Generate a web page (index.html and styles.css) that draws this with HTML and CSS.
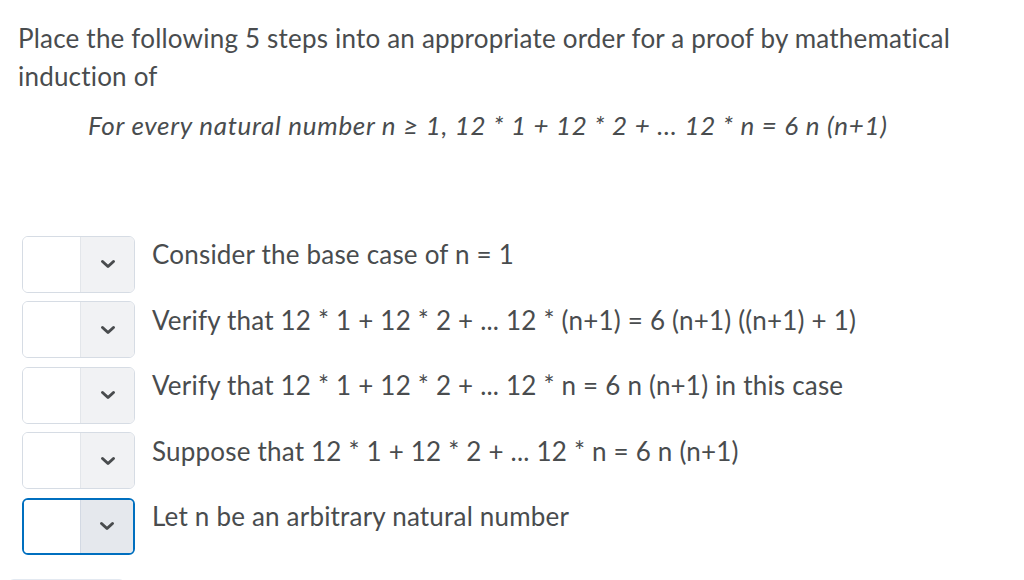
FILE: index.html
```html
<!DOCTYPE html>
<html>
<head>
<meta charset="utf-8">
<link rel="stylesheet" href="styles.css">
</head>
<body>
<div class="page">
  <p class="prompt">Place the following 5 steps into an appropriate order for a proof by mathematical induction of</p>
  <p class="statement">For every natural number n ≥ 1, 12 * 1 + 12 * 2 + ... 12 * n = 6 n (n+1)</p>
  <div class="list">
    <div class="row">
      <div class="select"><span class="value"></span><span class="arrow"><svg width="16" height="10" viewBox="0 0 16 10"><path d="M2.5 2.5 L8 7.5 L13.5 2.5" fill="none" stroke="#494c4e" stroke-width="3" stroke-linecap="round" stroke-linejoin="round"/></svg></span></div>
      <div class="label">Consider the base case of n = 1</div>
    </div>
    <div class="row">
      <div class="select"><span class="value"></span><span class="arrow"><svg width="16" height="10" viewBox="0 0 16 10"><path d="M2.5 2.5 L8 7.5 L13.5 2.5" fill="none" stroke="#494c4e" stroke-width="3" stroke-linecap="round" stroke-linejoin="round"/></svg></span></div>
      <div class="label">Verify that 12 * 1 + 12 * 2 + ... 12 * (n+1) = 6 (n+1) ((n+1) + 1)</div>
    </div>
    <div class="row">
      <div class="select"><span class="value"></span><span class="arrow"><svg width="16" height="10" viewBox="0 0 16 10"><path d="M2.5 2.5 L8 7.5 L13.5 2.5" fill="none" stroke="#494c4e" stroke-width="3" stroke-linecap="round" stroke-linejoin="round"/></svg></span></div>
      <div class="label">Verify that 12 * 1 + 12 * 2 + ... 12 * n = 6 n (n+1) in this case</div>
    </div>
    <div class="row">
      <div class="select"><span class="value"></span><span class="arrow"><svg width="16" height="10" viewBox="0 0 16 10"><path d="M2.5 2.5 L8 7.5 L13.5 2.5" fill="none" stroke="#494c4e" stroke-width="3" stroke-linecap="round" stroke-linejoin="round"/></svg></span></div>
      <div class="label">Suppose that 12 * 1 + 12 * 2 + ... 12 * n = 6 n (n+1)</div>
    </div>
    <div class="row">
      <div class="select focused"><span class="value"></span><span class="arrow"><svg width="16" height="10" viewBox="0 0 16 10"><path d="M2.5 2.5 L8 7.5 L13.5 2.5" fill="none" stroke="#494c4e" stroke-width="3" stroke-linecap="round" stroke-linejoin="round"/></svg></span></div>
      <div class="label">Let n be an arbitrary natural number</div>
    </div>
  </div>
  <div class="button-edge"></div>
</div>
</body>
</html>
```
FILE: styles.css
```css
html, body {
  margin: 0;
  padding: 0;
  background: #ffffff;
}
body {
  font-family: Lato, "Noto Sans", sans-serif;
  color: #494c4e;
  font-size: 26px;
  letter-spacing: 0.2px;
}
.page {
  padding: 20px 0 0 18px;
}
.prompt {
  margin: 0;
  line-height: 37.5px;
  width: 960px;
}
.statement {
  margin: 12px 0 0 70px;
  font-style: italic;
  line-height: 36px;
  letter-spacing: 0.7px;
}
.list {
  margin-top: 92.6px;
  margin-left: 4px;
  display: flex;
  flex-direction: column;
  gap: 8.5px;
}
.row {
  display: flex;
  align-items: flex-start;
  gap: 17px;
}
.select {
  box-sizing: border-box;
  width: 113px;
  height: 57px;
  border: 1px solid #d6dce4;
  border-radius: 6px;
  display: flex;
  overflow: hidden;
  flex-shrink: 0;
}
.value {
  width: 57px;
  background: #ffffff;
}
.arrow {
  flex: 1;
  background: #f1f2f4;
  border-left: 1px solid #e3e6ea;
  display: flex;
  align-items: center;
  justify-content: center;
}
.focused {
  border: 2px solid #006fbf;
}
.focused .value {
  width: 56px;
}
.focused .arrow {
  background: #e5e8ed;
  border-left-color: #d3d9e3;
}
.label {
  padding-top: 3.5px;
  line-height: 30px;
  white-space: nowrap;
}
.button-edge {
  margin-top: 24px;
  margin-left: -10px;
  width: 117px;
  height: 6px;
  border-top: 2px solid #e3e9f1;
  border-radius: 6px 6px 0 0;
}
```
